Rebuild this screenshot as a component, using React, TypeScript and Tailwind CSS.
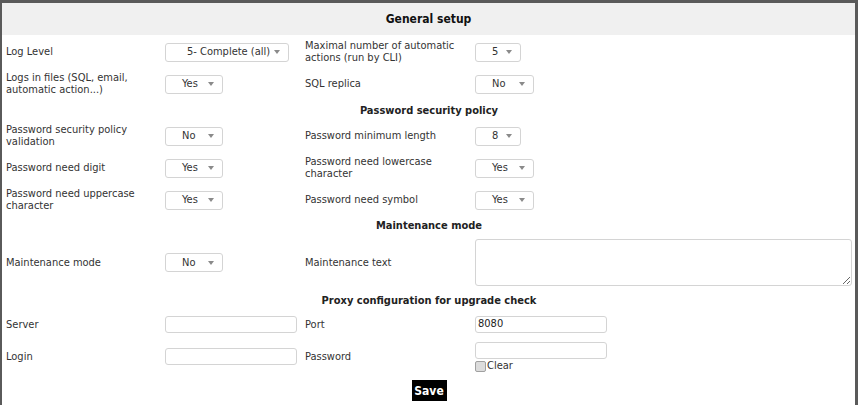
import React from "react";

const font = { fontFamily: '"DejaVu Sans Condensed", "DejaVu Sans", sans-serif' };

function Arrow() {
  return (
    <svg width="6" height="4" viewBox="0 0 6 4" className="shrink-0">
      <path d="M0 0 L6 0 L3 4 Z" fill="#8a8a8a" />
    </svg>
  );
}

function Select({ value, w, pl }: { value: string; w: string; pl: string }) {
  return (
    <div
      className={`${w} ${pl} h-[19px] flex items-center justify-between pr-[8px] border border-[#d4d4d4] rounded-[3px] bg-white text-[#333] text-[11px] leading-[12px]`}
    >
      <span>{value}</span>
      <Arrow />
    </div>
  );
}

function Label({ children }: { children: React.ReactNode }) {
  return <div className="text-[11px] leading-[12px] text-[#333] pr-[20px]">{children}</div>;
}

function Heading({ children, h }: { children: React.ReactNode; h: string }) {
  return (
    <div className={`${h} flex items-center justify-center font-bold text-[11px] text-[#222]`}>
      {children}
    </div>
  );
}

function TextInput({ value }: { value?: string }) {
  return (
    <div className="w-[132px] h-[17px] border border-[#d4d4d4] rounded-[3px] bg-white flex items-center pl-[2px] text-[11px] text-[#222]">
      {value}
    </div>
  );
}

const grid = "grid grid-cols-[159px_140px_170px_1fr] items-center";

export default function App() {
  return (
    <div
      style={font}
      className="w-[858px] h-[405px] bg-white border-t-[3px] border-l-[2px] border-r-[3px] border-[#5a5a5a] overflow-hidden"
    >
      <div className="h-[32px] bg-[#f0f0f0] flex items-center justify-center font-bold text-[12px] text-[#111]">
        General setup
      </div>
      <div className="pl-[4px] pr-[3px]">
        <div className={`${grid} h-[32px] mt-[1px]`}>
          <Label>Log Level</Label>
          <Select value="5- Complete (all)" w="w-[124px]" pl="pl-[21px]" />
          <Label>Maximal number of automatic actions (run by CLI)</Label>
          <Select value="5" w="w-[46px]" pl="pl-[16px]" />
        </div>
        <div className={`${grid} h-[32px]`}>
          <Label>Logs in files (SQL, email, automatic action...)</Label>
          <Select value="Yes" w="w-[58px]" pl="pl-[16px]" />
          <Label>SQL replica</Label>
          <Select value="No" w="w-[59px]" pl="pl-[16px]" />
        </div>
        <Heading h="h-[20px] pt-[2px]">Password security policy</Heading>
        <div className={`${grid} h-[32px]`}>
          <Label>Password security policy validation</Label>
          <Select value="No" w="w-[58px]" pl="pl-[16px]" />
          <Label>Password minimum length</Label>
          <Select value="8" w="w-[46px]" pl="pl-[16px]" />
        </div>
        <div className={`${grid} h-[32px]`}>
          <Label>Password need digit</Label>
          <Select value="Yes" w="w-[58px]" pl="pl-[16px]" />
          <Label>Password need lowercase character</Label>
          <Select value="Yes" w="w-[59px]" pl="pl-[16px]" />
        </div>
        <div className={`${grid} h-[32px]`}>
          <Label>Password need uppercase character</Label>
          <Select value="Yes" w="w-[58px]" pl="pl-[16px]" />
          <Label>Password need symbol</Label>
          <Select value="Yes" w="w-[59px]" pl="pl-[16px]" />
        </div>
        <Heading h="h-[21px]">Maintenance mode</Heading>
        <div className={`${grid} h-[51px]`}>
          <Label>Maintenance mode</Label>
          <Select value="No" w="w-[58px]" pl="pl-[16px]" />
          <Label>Maintenance text</Label>
          <textarea
            className="w-[377px] h-[47px] border border-[#d4d4d4] rounded-[3px] bg-white block outline-none"
            defaultValue=""
          />
        </div>
        <Heading h="h-[27px]">Proxy configuration for upgrade check</Heading>
        <div className={`${grid} h-[19px]`}>
          <Label>Server</Label>
          <TextInput />
          <Label>Port</Label>
          <TextInput value="8080" />
        </div>
        <div className={`${grid} h-[45px]`}>
          <Label>Login</Label>
          <TextInput />
          <Label>Password</Label>
          <div className="flex flex-col mt-[1px]">
            <TextInput />
            <div className="flex items-center h-[12px] mt-[1px] text-[11px] text-[#333]">
              <span className="w-[11px] h-[11px] border border-[#a0a0a0] bg-[#dcdcdc] rounded-[2px] mr-[1px]" />
              Clear
            </div>
          </div>
        </div>
        <div className="flex justify-center mt-[1px]">
          <button className="h-[21px] w-[35px] bg-black text-white font-bold text-[12px] flex items-center justify-center">
            Save
          </button>
        </div>
      </div>
    </div>
  );
}
